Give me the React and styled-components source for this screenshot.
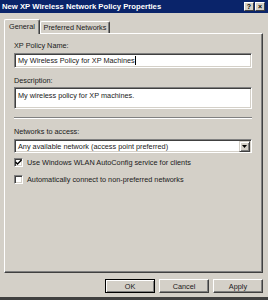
import styled, { createGlobalStyle } from "styled-components";

const Global = createGlobalStyle`
  html, body {
    margin: 0;
    padding: 0;
    background: #d4d0c8;
  }
  * {
    box-sizing: border-box;
  }
`;

const FONT = `"Liberation Sans", Arial, sans-serif`;

const Window = styled.div`
  width: 268px;
  height: 300px;
  display: flex;
  flex-direction: column;
  background: #d4d0c8;
  font-family: ${FONT};
  font-size: 7.3px;
  color: #1a1a1a;
  border-bottom: 3px solid #404040;
  overflow: hidden;
`;

const TitleBar = styled.div`
  height: 13px;
  flex: none;
  display: flex;
  align-items: center;
  justify-content: space-between;
  padding: 0 3px 0 2px;
  background: #0a246a;
`;

const Title = styled.span`
  color: #fff;
  font-weight: bold;
  font-size: 7.7px;
  line-height: 13px;
  white-space: nowrap;
`;

const CaptionButtons = styled.div`
  display: flex;
  gap: 1px;
`;

const CaptionButton = styled.div`
  width: 10px;
  height: 9px;
  background: #d4d0c8;
  border-top: 1px solid #fff;
  border-left: 1px solid #fff;
  border-right: 1px solid #404040;
  border-bottom: 1px solid #404040;
  display: flex;
  align-items: center;
  justify-content: center;
  font-weight: bold;
  font-size: 7px;
  line-height: 7px;
  color: #000;
`;

const Body = styled.div`
  flex: 1;
  display: flex;
  flex-direction: column;
  padding: 6px 5px 0 4px;
`;

const TabRow = styled.div`
  height: 14px;
  display: flex;
  align-items: flex-end;
  position: relative;
  z-index: 1;
`;

const Tab = styled.div`
  height: ${(p) => (p.$active ? 15 : 12)}px;
  width: ${(p) => p.$w}px;
  margin-bottom: ${(p) => (p.$active ? -1 : 0)}px;
  background: #d4d0c8;
  border-top: 1px solid #fff;
  border-left: 1px solid #fff;
  border-right: 1px solid #404040;
  border-top-left-radius: 2px;
  border-top-right-radius: 2px;
  box-shadow: inset -1px 0 0 #808080;
  display: flex;
  align-items: ${(p) => (p.$active ? "flex-start" : "center")};
  padding-top: ${(p) => (p.$active ? 2 : 0)}px;
  justify-content: center;
  white-space: nowrap;
  line-height: 9px;
`;

const Panel = styled.div`
  height: 240px;
  border-top: 1px solid #fff;
  border-left: 1px solid #fff;
  border-right: 1px solid #404040;
  border-bottom: 1px solid #404040;
  box-shadow: inset -1px -1px 0 #808080;
  padding: 7px 10px 0 9px;
  display: flex;
  flex-direction: column;
`;

const Label = styled.div`
  line-height: 9px;
  margin-top: ${(p) => p.$mt || 0}px;
  white-space: nowrap;
`;

const Field = styled.div`
  margin-top: ${(p) => p.$mt || 0}px;
  height: ${(p) => p.$h}px;
  background: #fff;
  border-top: 1px solid #808080;
  border-left: 1px solid #808080;
  border-right: 1px solid #fff;
  border-bottom: 1px solid #fff;
  box-shadow: inset 1px 1px 0 #404040, inset -1px -1px 0 #d4d0c8;
  padding: ${(p) => p.$pt || 0}px 3px 0 3px;
  display: flex;
  align-items: ${(p) => (p.$pt ? "flex-start" : "center")};
  line-height: 9px;
  white-space: nowrap;
`;

const Caret = styled.span`
  display: inline-block;
  width: 1px;
  height: 9px;
  background: #000;
  vertical-align: top;
`;

const Separator = styled.div`
  margin-top: 8px;
  height: 2px;
  border-top: 1px solid #808080;
  border-bottom: 1px solid #fff;
`;

const Select = styled(Field)`
  justify-content: space-between;
  padding: 0 1px 0 3px;
`;

const DropButton = styled.div`
  width: 11px;
  height: 11px;
  background: #d4d0c8;
  border-top: 1px solid #d4d0c8;
  border-left: 1px solid #d4d0c8;
  border-right: 1px solid #404040;
  border-bottom: 1px solid #404040;
  box-shadow: inset 1px 1px 0 #fff, inset -1px -1px 0 #808080;
  display: flex;
  align-items: center;
  justify-content: center;
`;

const CheckRow = styled.div`
  margin-top: ${(p) => p.$mt}px;
  display: flex;
  align-items: center;
  gap: 4px;
  line-height: 9px;
  white-space: nowrap;
`;

const CheckBox = styled.div`
  width: 9px;
  height: 9px;
  flex: none;
  background: #fff;
  border-top: 1px solid #808080;
  border-left: 1px solid #808080;
  border-right: 1px solid #fff;
  border-bottom: 1px solid #fff;
  box-shadow: inset 1px 1px 0 #404040, inset -1px -1px 0 #d4d0c8;
  display: flex;
  align-items: center;
  justify-content: center;
`;

const ButtonRow = styled.div`
  margin-top: 6px;
  display: flex;
  justify-content: flex-end;
  gap: 4px;
`;

const Button = styled.div`
  width: 50px;
  height: 14px;
  background: #d4d0c8;
  border: 1px solid ${(p) => (p.$default ? "#000" : "transparent")};
  border-top-color: ${(p) => (p.$default ? "#000" : "#fff")};
  border-left-color: ${(p) => (p.$default ? "#000" : "#fff")};
  border-right-color: ${(p) => (p.$default ? "#000" : "#404040")};
  border-bottom-color: ${(p) => (p.$default ? "#000" : "#404040")};
  box-shadow: ${(p) =>
    p.$default
      ? "inset 1px 1px 0 #fff, inset -1px -1px 0 #808080"
      : "inset -1px -1px 0 #808080"};
  display: flex;
  align-items: center;
  justify-content: center;
  line-height: 9px;
`;

const Check = () => (
  <svg width="7" height="7" viewBox="0 0 7 7">
    <path d="M0.5 3 L2.5 5 L6.5 1" stroke="#000" strokeWidth="1.4" fill="none" />
  </svg>
);

const Arrow = () => (
  <svg width="5" height="3" viewBox="0 0 5 3">
    <path d="M0 0 H5 L2.5 3 Z" fill="#000" />
  </svg>
);

export default function App() {
  return (
    <>
      <Global />
      <Window>
        <TitleBar>
          <Title>New XP Wireless Network Policy Properties</Title>
          <CaptionButtons>
            <CaptionButton>?</CaptionButton>
            <CaptionButton>×</CaptionButton>
          </CaptionButtons>
        </TitleBar>
        <Body>
          <TabRow>
            <Tab $active $w={36}>General</Tab>
            <Tab $w={70}>Preferred Networks</Tab>
          </TabRow>
          <Panel>
            <Label>XP Policy Name:</Label>
            <Field $mt={3} $h={15}>
              My Wireless Policy for XP Machines<Caret />
            </Field>
            <Label $mt={8}>Description:</Label>
            <Field $mt={2} $h={22} $pt={3}>
              My wireless policy for XP machines.
            </Field>
            <Separator />
            <Label $mt={8}>Networks to access:</Label>
            <Select $mt={3} $h={14}>
              <span>Any available network (access point preferred)</span>
              <DropButton>
                <Arrow />
              </DropButton>
            </Select>
            <CheckRow $mt={5}>
              <CheckBox>
                <Check />
              </CheckBox>
              Use Windows WLAN AutoConfig service for clients
            </CheckRow>
            <CheckRow $mt={8}>
              <CheckBox />
              Automatically connect to non-preferred networks
            </CheckRow>
          </Panel>
          <ButtonRow>
            <Button $default>OK</Button>
            <Button>Cancel</Button>
            <Button>Apply</Button>
          </ButtonRow>
        </Body>
      </Window>
    </>
  );
}
